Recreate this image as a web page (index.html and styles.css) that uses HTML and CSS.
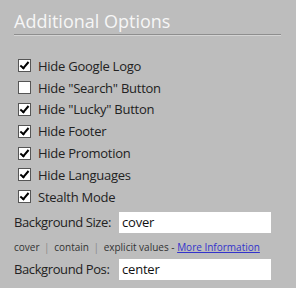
FILE: index.html
```html
<!DOCTYPE html>
<html lang="en">
<head>
    <meta charset="UTF-8">
    <title>Additional Options</title>
    <link rel="stylesheet" href="styles.css">
</head>
<body>

<div class="panel">
    <h2 class="panel-title">Additional Options</h2>

    <div class="option-list">
        <label class="option"><input type="checkbox" checked> Hide Google Logo</label>
        <label class="option"><input type="checkbox"> Hide "Search" Button</label>
        <label class="option"><input type="checkbox" checked> Hide "Lucky" Button</label>
        <label class="option"><input type="checkbox" checked> Hide Footer</label>
        <label class="option"><input type="checkbox" checked> Hide Promotion</label>
        <label class="option"><input type="checkbox" checked> Hide Languages</label>
        <label class="option"><input type="checkbox" checked> Stealth Mode</label>
    </div>

    <div class="field first">
        <label class="field-label">Background Size:</label>
        <input class="field-input" type="text" value="cover">
    </div>
    <div class="hint">
        cover <span class="sep">|</span> contain <span class="sep">|</span> explicit values - <a href="#">More Information</a>
    </div>
    <div class="field">
        <label class="field-label">Background Pos:</label>
        <input class="field-input" type="text" value="center">
    </div>
</div>

</body>
</html>
```

FILE: styles.css
```css
body, html {
    margin: 0;
    padding: 0;
    height: 100%;
    overflow: hidden;
}
body {
    background-color: #bdbdbd;
    font-family: "Open Sans", "DejaVu Sans", sans-serif;
    color: #222;
}
.panel {
    padding: 8px 14px 0 14px;
    width: 267px;
}
.panel-title {
    margin: 0;
    font-size: 18px;
    font-weight: 400;
    color: #f6f6f6;
    line-height: 26px;
    border-bottom: 1px solid #8e8e8e;
    box-shadow: 0 1px 0 #d4d4d4;
}
.option-list {
    display: flex;
    flex-direction: column;
    margin-top: 20px;
    padding-left: 4px;
}
.option {
    display: flex;
    align-items: center;
    height: 21.8px;
    font-size: 13px;
    letter-spacing: -0.25px;
}
/* plain white box with a black tick */
.option input {
    appearance: none;
    -webkit-appearance: none;
    position: relative;
    margin: 0 7px 0 0;
    width: 13px;
    height: 13px;
    box-sizing: border-box;
    border: 1px solid #555;
    background: #fff;
}
.option input:checked::after {
    content: "";
    position: absolute;
    left: 3px;
    top: 0px;
    width: 3px;
    height: 7px;
    border: solid #000;
    border-width: 0 2px 2px 0;
    transform: rotate(40deg);
}
.field {
    display: flex;
    align-items: center;
    gap: 4px;
    font-size: 13px;
    letter-spacing: -0.4px;
}
.field.first {
    margin-top: 4px;
}
.field-label {
    width: 101px;
    white-space: nowrap;
}
.field-input {
    width: 152px;
    height: 21px;
    box-sizing: border-box;
    border: none;
    background: #fff;
    font-family: "Open Sans", "DejaVu Sans", sans-serif;
    font-size: 13px;
    letter-spacing: -0.2px;
    color: #111;
    padding: 0 3px;
    outline: none;
}
.hint {
    font-size: 10px;
    color: #333;
    margin: 7px 0 5px 0;
}
.hint .sep {
    color: #888;
    padding: 0 2px;
}
.hint a {
    color: #3333cc;
}
```
